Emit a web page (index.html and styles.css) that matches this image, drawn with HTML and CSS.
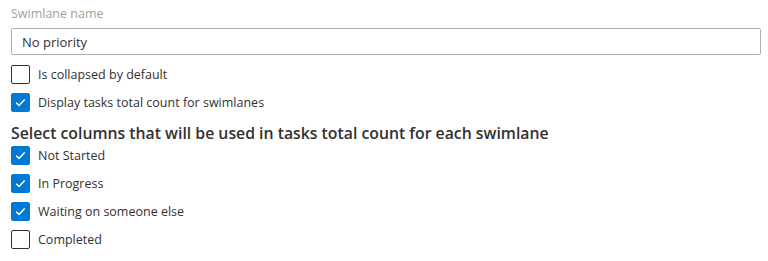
FILE: index.html
```html
<!DOCTYPE html>
<html lang="en">
  <head>
    <title>Swimlane settings</title>
    <link rel="stylesheet" href="styles.css">
  </head>
  <body>
  <div class="panel">
    <label class="field-label" for="swimlane-name">Swimlane name</label>
    <input class="text-input" id="swimlane-name" type="text" value="No priority">

    <div class="check-row">
      <span class="box"></span>
      <span class="check-text">Is collapsed by default</span>
    </div>
    <div class="check-row">
      <span class="box checked"><svg viewBox="0 0 20 20"><path d="M5 10.3l3.3 3.2 6.6-7"/></svg></span>
      <span class="check-text">Display tasks total count for swimlanes</span>
    </div>

    <h3 class="section-title">Select columns that will be used in tasks total count for each swimlane</h3>
    <div class="columns">
      <div class="check-row">
        <span class="box checked"><svg viewBox="0 0 20 20"><path d="M5 10.3l3.3 3.2 6.6-7"/></svg></span>
        <span class="check-text">Not Started</span>
      </div>
      <div class="check-row">
        <span class="box checked"><svg viewBox="0 0 20 20"><path d="M5 10.3l3.3 3.2 6.6-7"/></svg></span>
        <span class="check-text">In Progress</span>
      </div>
      <div class="check-row">
        <span class="box checked"><svg viewBox="0 0 20 20"><path d="M5 10.3l3.3 3.2 6.6-7"/></svg></span>
        <span class="check-text">Waiting on someone else</span>
      </div>
      <div class="check-row">
        <span class="box"></span>
        <span class="check-text">Completed</span>
      </div>
    </div>
  </div>
  </body>
</html>
```
FILE: styles.css
```css
body {
  margin: 0;
  background: #fff;
  font-family: "Open Sans", "Noto Sans", sans-serif;
  color: #323130;
}

.panel {
  padding: 4px 8px 0 11px;
  display: flex;
  flex-direction: column;
}

.field-label {
  font-size: 12.5px;
  color: #a19f9d;
  height: 20px;
  line-height: 20px;
  margin-bottom: 4px;
}

.text-input {
  box-sizing: border-box;
  width: 750px;
  height: 27px;
  border: 1px solid #b0aeac;
  border-radius: 2px;
  padding: 0 10px;
  font-family: inherit;
  font-size: 13px;
  color: #323130;
  margin: 0 0 9px 0;
  outline: none;
}

.check-row {
  display: flex;
  align-items: center;
  height: 20px;
  margin-bottom: 8px;
}

.box {
  box-sizing: border-box;
  width: 19px;
  height: 19px;
  border: 1px solid #323130;
  border-radius: 2px;
  margin-right: 8px;
  display: flex;
  align-items: center;
  justify-content: center;
}

.box.checked {
  background: #0078d4;
  border-color: #0078d4;
}

.box svg {
  width: 19px;
  height: 19px;
  fill: none;
  stroke: #fff;
  stroke-width: 1.9;
}

.check-text {
  font-size: 12.5px;
}

.section-title {
  margin: 2px 0 1px 0;
  font-size: 15.8px;
  font-weight: 600;
  line-height: 22px;
}
```
